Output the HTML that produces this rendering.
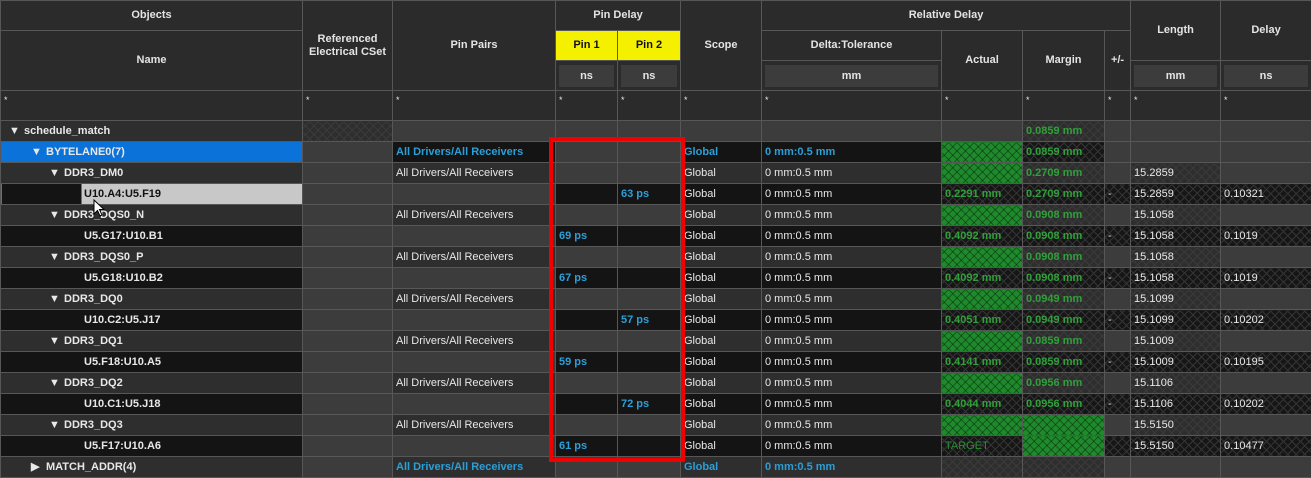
<!DOCTYPE html>
<html><head><meta charset="utf-8"><style>
html,body{margin:0;padding:0;background:#2a2a2a;width:1311px;height:478px;overflow:hidden}
table{border-collapse:collapse;table-layout:fixed;position:absolute;left:0;top:0;width:1311px;font-family:"Liberation Sans",sans-serif;font-size:11px;color:#e8e8e8}
td,th{border:1px solid #575757;padding:0 0 0 3px;white-space:nowrap;overflow:hidden;height:20px;line-height:20px}
th{background:#2b2b2b;font-weight:bold;text-align:center;padding:0;height:29px;line-height:13px;color:#e4e4e4}
th.y{background:#f5f000;color:#111}
th .u{display:block;margin:3px;background:#3c3c3c;height:22px;line-height:22px}
tr.f td{height:29px;line-height:18px;vertical-align:top;background:#2b2b2b;font-size:9px}
.g{background:#2e2e2e}.m{background:#3c3c3c}.k{background:#141414}
.hg{background-color:#1f8a2c;background-image:repeating-linear-gradient(45deg,rgba(0,0,0,.35) 0 1px,transparent 1px 6px),repeating-linear-gradient(-45deg,rgba(0,0,0,.35) 0 1px,transparent 1px 6px)}
.hd{background-color:#161616;background-image:repeating-linear-gradient(45deg,#343434 0 1px,transparent 1px 6px),repeating-linear-gradient(-45deg,#343434 0 1px,transparent 1px 6px)}
.hm{background-color:#2e2e2e;background-image:repeating-linear-gradient(45deg,#3a3a3a 0 1px,transparent 1px 6px),repeating-linear-gradient(-45deg,#3a3a3a 0 1px,transparent 1px 6px)}
.b{color:#2a9fd8;font-weight:bold}.gr{color:#2fa03a;font-weight:bold}
.n{font-weight:bold}
.l1{padding-left:8px}.l2{padding-left:30px}.l3{padding-left:48px}.l4{padding-left:83px}
.sel{background:linear-gradient(90deg,#141414 0 80px,#c8c8c8 80px);color:#111}
.t{font-size:11px;display:inline-block;width:15px}
.box{position:absolute;left:549px;top:137px;width:128px;height:317px;border:4px solid #f00000}
</style></head><body>
<table>
<colgroup><col style="width:302px"><col style="width:90px"><col style="width:163px"><col style="width:62px"><col style="width:63px"><col style="width:81px"><col style="width:180px"><col style="width:81px"><col style="width:82px"><col style="width:26px"><col style="width:90px"><col style="width:91px"></colgroup>
<tr><th>Objects</th><th rowspan="3">Referenced<br>Electrical CSet</th><th rowspan="3">Pin Pairs</th><th colspan="2">Pin Delay</th><th rowspan="3">Scope</th><th colspan="4">Relative Delay</th><th rowspan="2">Length</th><th rowspan="2">Delay</th></tr>
<tr><th rowspan="2">Name</th><th class="y">Pin 1</th><th class="y">Pin 2</th><th>Delta:Tolerance</th><th rowspan="2">Actual</th><th rowspan="2">Margin</th><th rowspan="2">+/-</th></tr>
<tr><th><span class="u">ns</span></th><th><span class="u">ns</span></th><th><span class="u">mm</span></th><th><span class="u">mm</span></th><th><span class="u">ns</span></th></tr>
<tr class="f"><td>*</td><td>*</td><td>*</td><td>*</td><td>*</td><td>*</td><td>*</td><td>*</td><td>*</td><td>*</td><td>*</td><td>*</td></tr>

<tr><td class="g n l1"><span class="t">▼</span>schedule_match</td><td class="hm"></td><td class="m"></td><td class="m"></td><td class="m"></td><td class="m"></td><td class="m"></td><td class="m"></td><td class="hm gr">0.0859 mm</td><td class="m"></td><td class="m"></td><td class="m"></td></tr>
<tr><td class="n l2" style="background:#0a72d8"><span class="t">▼</span>BYTELANE0(7)</td><td class="m"></td><td class="k b">All Drivers/All Receivers</td><td class="m"></td><td class="m"></td><td class="k b">Global</td><td class="k b">0 mm:0.5 mm</td><td class="hg"></td><td class="hd gr">0.0859 mm</td><td class="m"></td><td class="m"></td><td class="m"></td></tr>
<tr><td class="g n l3"><span class="t">▼</span>DDR3_DM0</td><td class="m"></td><td class="g">All Drivers/All Receivers</td><td class="m"></td><td class="m"></td><td class="g">Global</td><td class="g">0 mm:0.5 mm</td><td class="hg"></td><td class="hm gr">0.2709 mm</td><td class="m"></td><td class="hm">15.2859</td><td class="m"></td></tr>
<tr><td class="sel n l4">U10.A4:U5.F19</td><td class="m"></td><td class="m"></td><td class="k"></td><td class="k b">63 ps</td><td class="k">Global</td><td class="k">0 mm:0.5 mm</td><td class="hd gr">0.2291 mm</td><td class="hd gr">0.2709 mm</td><td class="hd">-</td><td class="hd">15.2859</td><td class="hd">0.10321</td></tr>
<tr><td class="g n l3"><span class="t">▼</span>DDR3_DQS0_N</td><td class="m"></td><td class="g">All Drivers/All Receivers</td><td class="m"></td><td class="m"></td><td class="g">Global</td><td class="g">0 mm:0.5 mm</td><td class="hg"></td><td class="hm gr">0.0908 mm</td><td class="m"></td><td class="hm">15.1058</td><td class="m"></td></tr>
<tr><td class="k n l4">U5.G17:U10.B1</td><td class="m"></td><td class="m"></td><td class="k b">69 ps</td><td class="k"></td><td class="k">Global</td><td class="k">0 mm:0.5 mm</td><td class="hd gr">0.4092 mm</td><td class="hd gr">0.0908 mm</td><td class="hd">-</td><td class="hd">15.1058</td><td class="hd">0.1019</td></tr>
<tr><td class="g n l3"><span class="t">▼</span>DDR3_DQS0_P</td><td class="m"></td><td class="g">All Drivers/All Receivers</td><td class="m"></td><td class="m"></td><td class="g">Global</td><td class="g">0 mm:0.5 mm</td><td class="hg"></td><td class="hm gr">0.0908 mm</td><td class="m"></td><td class="hm">15.1058</td><td class="m"></td></tr>
<tr><td class="k n l4">U5.G18:U10.B2</td><td class="m"></td><td class="m"></td><td class="k b">67 ps</td><td class="k"></td><td class="k">Global</td><td class="k">0 mm:0.5 mm</td><td class="hd gr">0.4092 mm</td><td class="hd gr">0.0908 mm</td><td class="hd">-</td><td class="hd">15.1058</td><td class="hd">0.1019</td></tr>
<tr><td class="g n l3"><span class="t">▼</span>DDR3_DQ0</td><td class="m"></td><td class="g">All Drivers/All Receivers</td><td class="m"></td><td class="m"></td><td class="g">Global</td><td class="g">0 mm:0.5 mm</td><td class="hg"></td><td class="hm gr">0.0949 mm</td><td class="m"></td><td class="hm">15.1099</td><td class="m"></td></tr>
<tr><td class="k n l4">U10.C2:U5.J17</td><td class="m"></td><td class="m"></td><td class="k"></td><td class="k b">57 ps</td><td class="k">Global</td><td class="k">0 mm:0.5 mm</td><td class="hd gr">0.4051 mm</td><td class="hd gr">0.0949 mm</td><td class="hd">-</td><td class="hd">15.1099</td><td class="hd">0.10202</td></tr>
<tr><td class="g n l3"><span class="t">▼</span>DDR3_DQ1</td><td class="m"></td><td class="g">All Drivers/All Receivers</td><td class="m"></td><td class="m"></td><td class="g">Global</td><td class="g">0 mm:0.5 mm</td><td class="hg"></td><td class="hm gr">0.0859 mm</td><td class="m"></td><td class="hm">15.1009</td><td class="m"></td></tr>
<tr><td class="k n l4">U5.F18:U10.A5</td><td class="m"></td><td class="m"></td><td class="k b">59 ps</td><td class="k"></td><td class="k">Global</td><td class="k">0 mm:0.5 mm</td><td class="hd gr">0.4141 mm</td><td class="hd gr">0.0859 mm</td><td class="hd">-</td><td class="hd">15.1009</td><td class="hd">0.10195</td></tr>
<tr><td class="g n l3"><span class="t">▼</span>DDR3_DQ2</td><td class="m"></td><td class="g">All Drivers/All Receivers</td><td class="m"></td><td class="m"></td><td class="g">Global</td><td class="g">0 mm:0.5 mm</td><td class="hg"></td><td class="hm gr">0.0956 mm</td><td class="m"></td><td class="hm">15.1106</td><td class="m"></td></tr>
<tr><td class="k n l4">U10.C1:U5.J18</td><td class="m"></td><td class="m"></td><td class="k"></td><td class="k b">72 ps</td><td class="k">Global</td><td class="k">0 mm:0.5 mm</td><td class="hd gr">0.4044 mm</td><td class="hd gr">0.0956 mm</td><td class="hd">-</td><td class="hd">15.1106</td><td class="hd">0.10202</td></tr>
<tr><td class="g n l3"><span class="t">▼</span>DDR3_DQ3</td><td class="m"></td><td class="g">All Drivers/All Receivers</td><td class="m"></td><td class="m"></td><td class="g">Global</td><td class="g">0 mm:0.5 mm</td><td class="hg"></td><td class="hg"></td><td class="m"></td><td class="hm">15.5150</td><td class="m"></td></tr>
<tr><td class="k n l4">U5.F17:U10.A6</td><td class="m"></td><td class="m"></td><td class="k b">61 ps</td><td class="k"></td><td class="k">Global</td><td class="k">0 mm:0.5 mm</td><td class="hd" style="color:#2a8a34">TARGET</td><td class="hg"></td><td class="hd"></td><td class="hd">15.5150</td><td class="hd">0.10477</td></tr>
<tr><td class="g n l2"><span class="t">▶</span>MATCH_ADDR(4)</td><td class="m"></td><td class="g b">All Drivers/All Receivers</td><td class="m"></td><td class="m"></td><td class="g b">Global</td><td class="g b">0 mm:0.5 mm</td><td class="hm"></td><td class="hm"></td><td class="m"></td><td class="m"></td><td class="m"></td></tr>
</table>
<div class="box"></div>
<svg style="position:absolute;left:93px;top:199px" width="12" height="18" viewBox="0 0 12 18"><path d="M1 1 L1 15 L4.5 11.5 L7 17 L9 16 L6.5 10.5 L11 10.5 Z" fill="#fff" stroke="#000" stroke-width="1"/></svg>
</body></html>
